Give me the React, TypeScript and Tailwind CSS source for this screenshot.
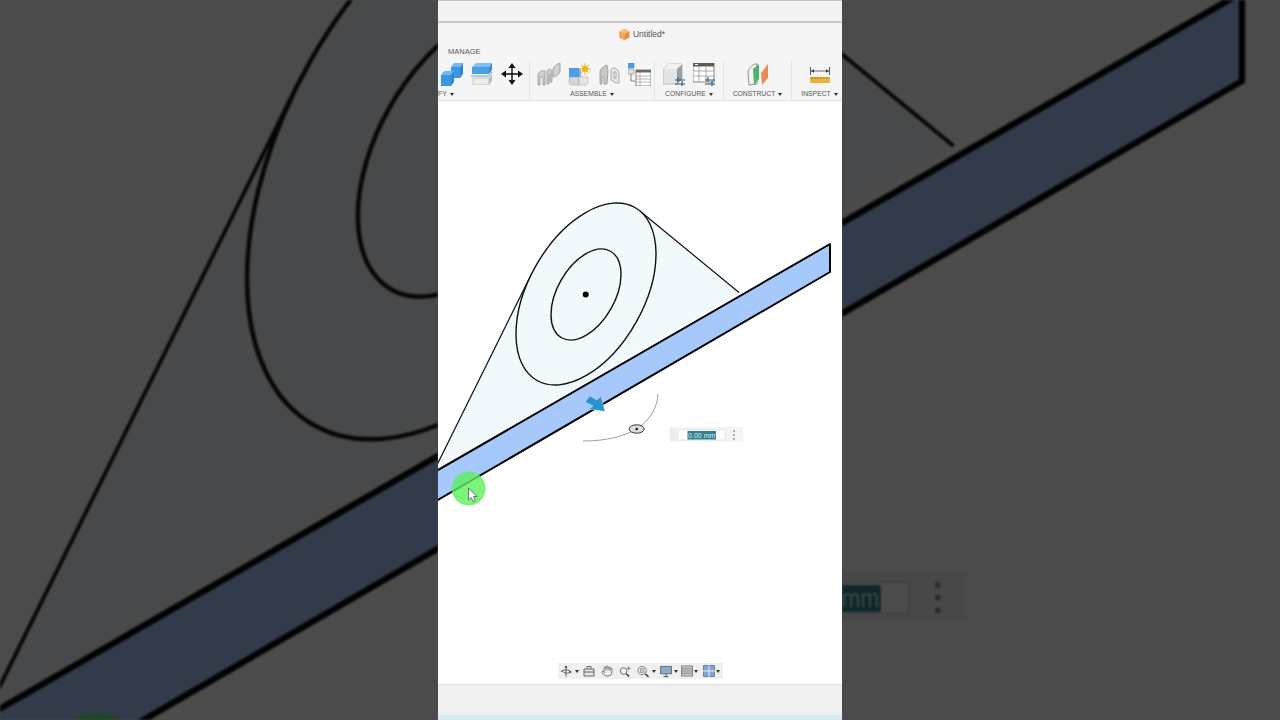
import { Hand } from 'lucide-react';

const FONT = "font-['Liberation_Sans',Arial,sans-serif]";

function Caret() {
  return (
    <svg width="4" height="3" viewBox="0 0 4 3" className="shrink-0">
      <path d="M0 0h4L2 3z" fill="#333" />
    </svg>
  );
}

function CombineIcon() {
  return (
    <svg width="22" height="23" viewBox="0 0 22 23">
      <path d="M10 4h9v11h-9z" fill="#3a97e4" />
      <path d="M10 4l3-4h9l-3 4z" fill="#72b9ee" />
      <path d="M19 4l3-4v11l-3 4z" fill="#2f86d2" />
      <path d="M0 12h10v11H0z" fill="#3a97e4" />
      <path d="M0 12l3-4h10l-3 4z" fill="#72b9ee" />
      <path d="M10 12l3-4v11l-3 4z" fill="#2f86d2" />
    </svg>
  );
}

function SliceIcon() {
  return (
    <svg width="22" height="22" viewBox="0 0 22 22">
      <path d="M1 4h17v7H1z" fill="#4a9fe4" />
      <path d="M1 4l4-4h16l-3 4z" fill="#7fc0ef" />
      <path d="M18 4l3-4v7l-3 4z" fill="#3a8bd0" />
      <path d="M0 13h18l3-4" fill="none" stroke="#6aa3c8" strokeWidth="1" />
      <path d="M2 15h16v7H2z" fill="#ececec" stroke="#a8a8a8" strokeWidth="0.6" />
      <path d="M18 15l3-4v7l-3 4z" fill="#bcbcbc" />
    </svg>
  );
}

function MoveIcon() {
  return (
    <svg width="22" height="22" viewBox="0 0 22 22">
      <path d="M11 4v14M4 11h14" stroke="#111" strokeWidth="1.4" />
      <path d="M11 0l3.500 5h-7zM11 22l3.500-5h-7zM0 11l5-3.500v7zM22 11l-5-3.500v7z" fill="#111" />
    </svg>
  );
}

function JointIcon() {
  return (
    <svg width="24" height="23" viewBox="0 0 24 23">
      <g fill="#cfd1d2" stroke="#8a8c8e" strokeWidth="0.7">
        <path d="M1 22V12C1 9 5 7 8 8V22H6V14H3V22Z" />
        <path d="M10 21V8C11 5 14 6 15 8V19H13V11H12V21Z" />
        <path d="M16 14V6C17 3 20 1 23 0V9C22 12 19 13 16 14Z" />
      </g>
    </svg>
  );
}

function AsBuiltIcon() {
  return (
    <svg width="24" height="23" viewBox="0 0 24 23">
      <path d="M1 5h10v9H1z" fill="#4a9fe4" />
      <path d="M1 14h10v8H3l-2-2z" fill="#d5d7d8" stroke="#a0a2a4" strokeWidth="0.5" />
      <path d="M11 14h9v6l-2 2h-7z" fill="#e4e5e6" stroke="#a0a2a4" strokeWidth="0.5" />
      <path d="M11 5l2 2v7h-2z" fill="#7fb7e3" />
      <circle cx="17" cy="6" r="3" fill="#f5a800" />
      <path d="M17 0v12M11 6h12M13 2l8 8M21 2l-8 8" stroke="#f5b417" strokeWidth="1" />
    </svg>
  );
}

function JointOriginIcon() {
  return (
    <svg width="22" height="23" viewBox="0 0 22 23">
      <path d="M1 21V8C2 5 5 3 8 2L9 8L8 21H5V14H3V21Z" fill="#c7c9ca" stroke="#8a8c8e" strokeWidth="0.7" />
      <path d="M12 8C12 5 15 4 17 6C20 7 20 10 20 13V20H17L12 17ZM15 9V15H17V9Z" fill="#e6e7e8" fillRule="evenodd" stroke="#8a8c8e" strokeWidth="0.7" />
    </svg>
  );
}

function TableIcon() {
  return (
    <svg width="23" height="23" viewBox="0 0 23 23">
      <path d="M0 0h6v5H0z" fill="#4a9fe4" stroke="#6a7f90" strokeWidth="0.5" />
      <path d="M0 6h6v5H0z" fill="#dfe1e2" stroke="#6a7f90" strokeWidth="0.5" />
      <path d="M3 11v7h4" fill="none" stroke="#555" strokeWidth="0.7" />
      <path d="M8 7h15v16H8z" fill="#fff" stroke="#666" strokeWidth="0.8" />
      <path d="M8 7h15v2.500H8z" fill="#666" />
      <path d="M8 13h15M8 16h15M8 19h15M12 9v14" stroke="#999" strokeWidth="0.7" />
    </svg>
  );
}

function ParamCubeIcon() {
  return (
    <svg width="22" height="23" viewBox="0 0 22 23">
      <path d="M0 6l5-5h14v15l-5 5H0z" fill="#e3e4e5" stroke="#9a9c9e" strokeWidth="0.6" />
      <path d="M14 6l5-5v15l-5 5z" fill="#9c9ea0" />
      <path d="M0 6l5-5h14l-5 5z" fill="#f1f1f1" />
      <path d="M12 17h10M12 21h10" stroke="#444" strokeWidth="1" />
      <path d="M15 14v5M19 18v5" stroke="#1f77c4" strokeWidth="1.400" />
    </svg>
  );
}

function ParamTableIcon() {
  return (
    <svg width="22" height="23" viewBox="0 0 22 23">
      <path d="M0 0h21v19H0z" fill="#fff" stroke="#666" strokeWidth="0.8" />
      <path d="M0 0h21v3.500H0z" fill="#5c5c5c" />
      <path d="M2 1.500h3" stroke="#fff" strokeWidth="1" />
      <path d="M0 8h21M0 13h21M6 4v15M13 4v15" stroke="#9a9a9a" strokeWidth="0.8" />
      <path d="M12 17h10M12 21h10" stroke="#444" strokeWidth="1" />
      <path d="M15 14v5M19 18v5" stroke="#1f77c4" strokeWidth="1.400" />
    </svg>
  );
}

function ConstructIcon() {
  return (
    <svg width="22" height="23" viewBox="0 0 22 23">
      <path d="M1 9C1 6 5 2 8 1H10V21L2 22Z" fill="#f2f2f2" stroke="#777" strokeWidth="0.8" />
      <path d="M6 6L12 1V16L7 22Z" fill="#4fb36d" />
      <path d="M14 10L21 1V15L15 22Z" fill="#e58e57" />
    </svg>
  );
}

function InspectIcon() {
  return (
    <svg width="20" height="17" viewBox="0 0 20 17">
      <path d="M0.500 1v8M19.500 1v8" stroke="#444" strokeWidth="0.9" />
      <path d="M1 5h18" stroke="#444" strokeWidth="0.8" />
      <path d="M1 5l3-1.700v3.400zM19 5l-3-1.700v3.400z" fill="#444" />
      <path d="M0 11h20v6H0z" fill="#e9b33a" />
      <path d="M2 11v2M5 11v2M8 11v2M11 11v2M14 11v2M17 11v2" stroke="#8a6a1c" strokeWidth="0.7" />
    </svg>
  );
}

function ToolGroup({
  label,
  width,
  className,
  labelClass,
  children,
}: {
  label: string;
  width: string;
  className: string;
  labelClass: string;
  children: React.ReactNode;
}) {
  return (
    <div className={`${width} flex flex-col mt-[2px] mb-[1px] ${width === 'flex-1' ? '' : 'border-r border-[#e4e4e4]'}`}>
      <div className={`h-[28px] flex items-center ${className}`}>{children}</div>
      <div className={`flex items-center gap-[3px] h-[11px] pt-px text-[6.8px] leading-none text-[#555] ${labelClass}`}>
        {label}
        <Caret />
      </div>
    </div>
  );
}

function Header() {
  return (
    <div className="h-[101px] shrink-0 flex flex-col bg-[#f5f5f5] border-b border-[#e4e4e4]">
      <div className="h-[23px] shrink-0 bg-[#f3f3f3] border-t border-[#c4c4c4] border-b-2 border-b-[#c9c9c9]" />
      <div className="h-[22px] shrink-0 flex items-center justify-center gap-[3px] pl-[4px] text-[8.5px] text-[#555]">
        <svg width="11" height="11" viewBox="0 0 11 11">
          <path d="M5.500 0L10.500 2.500v6L5.500 11 .5 8.500v-6z" fill="#ee8c35" />
          <path d="M5.500 0L10.500 2.500 5.500 5 .5 2.500z" fill="#f8c084" />
          <path d="M5.500 5v6L.5 8.500v-6z" fill="#f4a455" />
        </svg>
        Untitled*
      </div>
      <div className="h-[13px] shrink-0 flex items-center pl-[10px] text-[7.5px] text-[#555]">MANAGE</div>
      <div className="flex h-[42px] shrink-0">
        <ToolGroup label="FY" width="w-[92px]" className="gap-[8px] pl-[3px]" labelClass="">
          <CombineIcon />
          <SliceIcon />
          <MoveIcon />
        </ToolGroup>
        <ToolGroup label="ASSEMBLE" width="w-[125px]" className="gap-[7px] pl-[7px]" labelClass="justify-center">
          <JointIcon />
          <AsBuiltIcon />
          <JointOriginIcon />
          <TableIcon />
        </ToolGroup>
        <ToolGroup label="CONFIGURE" width="w-[69px]" className="gap-[8px] pl-[8px]" labelClass="justify-center">
          <ParamCubeIcon />
          <ParamTableIcon />
        </ToolGroup>
        <ToolGroup label="CONSTRUCT" width="w-[68px]" className="justify-center" labelClass="justify-center">
          <ConstructIcon />
        </ToolGroup>
        <ToolGroup label="INSPECT" width="flex-1" className="pl-[18px]" labelClass="justify-center pl-[5px]">
          <InspectIcon />
        </ToolGroup>
      </div>
    </div>
  );
}

// model, gizmo and dimension box; the side panels show the same thing zoomed in
function Scene() {
  return (
    <>
      <rect x="430" y="0" width="420" height="720" fill="#fff" />
      <polygon points="430,479 531.500,274 639.600,210.700 739,292.500 430,474" fill="#f1f9fd" />
      <path d="M430 479L531.500 274M639.600 210.700L739 292.500" stroke="#111" strokeWidth="1.200" fill="none" />
      <ellipse cx="586" cy="294" rx="57.500" ry="99.400" transform="rotate(29.500 586 294)" fill="#f1f9fd" stroke="#111" strokeWidth="1.400" />
      <ellipse cx="586" cy="294.500" rx="28.750" ry="49.700" transform="rotate(29.500 586 294.500)" fill="none" stroke="#111" strokeWidth="1.400" />
      <circle cx="585.700" cy="294.500" r="3" fill="#000" />
      <polygon points="430,474.600 830,244 830,272 430,504.600" fill="#a6c8fb" stroke="#050505" strokeWidth="2" strokeLinejoin="round" />

      <path d="M658 394C656 424 628 441 583 441" fill="none" stroke="#888" strokeWidth="0.8" />
      <ellipse cx="636.700" cy="429" rx="7.500" ry="4.200" fill="#dcdcdc" stroke="#333" strokeWidth="1" />
      <circle cx="636.700" cy="429" r="1.300" fill="#111" />
      <polygon points="585,402 590,396 597,400 601,396 605,411.500 589,409 593,406" fill="#2b93cf" stroke="#c5e5f5" strokeWidth="0.5" />

      <rect x="669" y="427" width="74" height="15" fill="#f4f4f4" />
      <path d="M671 428v13M673 428v13M675 428v13" stroke="#e6e6e6" strokeWidth="1" />
      <rect x="678" y="430" width="47" height="10" fill="#fff" stroke="#c9c9c9" strokeWidth="0.4" />
      <rect x="687.500" y="431" width="28.500" height="8.500" fill="#2f7f8f" />
      <text x="688" y="438" fontSize="8" textLength="27.500" lengthAdjust="spacingAndGlyphs" fontFamily="Liberation Sans, Arial, sans-serif" fill="#d8eef0">0.00 mm</text>
      <circle cx="734" cy="431" r="0.900" fill="#888" />
      <circle cx="734" cy="435" r="0.900" fill="#888" />
      <circle cx="734" cy="439" r="0.900" fill="#888" />

      <circle cx="468.700" cy="488.500" r="17" fill="#5cf05c" fillOpacity="0.8" />
      <path d="M468.500 488v12l2.700-2.600 2 4.200 2.200-1-2-4.100h3.600z" fill="#fff" stroke="#555" strokeWidth="0.8" />
    </>
  );
}

function NavBar() {
  return (
    <div className="absolute left-[120px] bottom-[5px] w-[165px] h-[16px] bg-[#f0f0f0] flex items-center">
      <svg width="12" height="13" viewBox="0 0 13 13" className="ml-[2px]">
        <path d="M6.500 1v11M1 7c2-3 9-3 11 0M2 5c2 4 7 4 10 2" fill="none" stroke="#555" strokeWidth="1" />
        <path d="M6.500 0L4.800 2.500h3.400zM12.500 7l-2.500-1v2.400z" fill="#444" />
      </svg>
      <span className="ml-[3px]"><Caret /></span>
      <svg width="12" height="12" viewBox="0 0 12 12" className="ml-[4px]">
        <path d="M1 4h10v7H1zM1 7h10" fill="#e6e6e6" stroke="#666" strokeWidth="1" />
        <path d="M4 4V1.500h4V4" fill="none" stroke="#666" strokeWidth="1" />
      </svg>
      <Hand size={12} strokeWidth={1.5} className="ml-[6px] text-[#555]" />
      <svg width="12" height="13" viewBox="0 0 13 13" className="ml-[6px]">
        <circle cx="5" cy="6" r="3.600" fill="none" stroke="#666" strokeWidth="1" />
        <path d="M8 9l3 3" stroke="#333" strokeWidth="1.500" />
        <path d="M10.500 1v4M8.500 3h4" stroke="#666" strokeWidth="0.8" />
      </svg>
      <svg width="12" height="13" viewBox="0 0 13 13" className="ml-[6px]">
        <circle cx="5.500" cy="5.500" r="4.500" fill="none" stroke="#777" strokeWidth="1" />
        <rect x="3.500" y="3.500" width="4" height="4" fill="#ccc" stroke="#777" strokeWidth="0.6" />
        <path d="M9 9l3.500 3.500" stroke="#333" strokeWidth="1.500" />
      </svg>
      <span className="ml-[3px]"><Caret /></span>
      <svg width="12" height="13" viewBox="0 0 13 13" className="ml-[4px]">
        <path d="M.5 1h12v8H.5z" fill="#8aaccd" stroke="#666" strokeWidth="1" />
        <path d="M4 12h5M6.500 9v3" stroke="#666" strokeWidth="1.200" />
      </svg>
      <span className="ml-[2px]"><Caret /></span>
      <svg width="12" height="12" viewBox="0 0 13 12" className="ml-[3px]">
        <path d="M.5 .5h12v11H.5z" fill="#d4d4d4" stroke="#777" strokeWidth="1" />
        <path d="M1 3h11M1 5h11M1 7h11M1 9h11" stroke="#777" strokeWidth="0.8" />
      </svg>
      <span className="ml-[1px]"><Caret /></span>
      <svg width="12" height="12" viewBox="0 0 12 12" className="ml-[5px]">
        <path d="M.5 .5h11v11H.5z" fill="#7ea6d8" stroke="#6a7f9a" strokeWidth="1" />
        <path d="M6 0v12M0 6h12" stroke="#e8eef5" strokeWidth="1" />
      </svg>
      <span className="ml-[1px]"><Caret /></span>
    </div>
  );
}

export default function App() {
  return (
    <div className={`${FONT} w-[1280px] h-[720px] flex overflow-hidden bg-[#4b4b4b]`}>
      <div className="w-[438px] h-full overflow-hidden">
        <svg width="438" height="720" viewBox="438 246.400 138.300 227.200" preserveAspectRatio="none" className="block brightness-[0.295] blur-[1px]">
          <Scene />
        </svg>
      </div>

      <div className="w-[404px] h-full flex flex-col bg-white">
        <Header />
        <div className="flex-1 relative">
          <svg width="404" height="583" viewBox="438 101 404 583" className="block">
            <Scene />
          </svg>
          <NavBar />
        </div>
        <div className="h-[31px] shrink-0 bg-[#f0f0f0] border-t border-[#e0e0e0]" />
        <div className="h-[5px] shrink-0 bg-[#d6e9ef]" />
      </div>

      <div className="w-[438px] h-full overflow-hidden">
        <svg width="438" height="720" viewBox="703.800 246.400 138.200 227.200" preserveAspectRatio="none" className="block brightness-[0.295] blur-[1px]">
          <Scene />
        </svg>
      </div>
    </div>
  );
}
